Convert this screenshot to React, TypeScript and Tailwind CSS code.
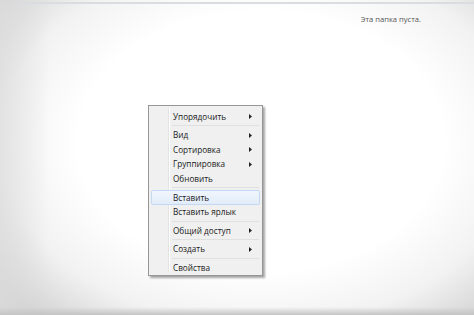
type MenuItem =
  | { kind: "item"; label: string; submenu?: boolean; active?: boolean }
  | { kind: "sep" };

const items: MenuItem[] = [
  { kind: "item", label: "Упорядочить", submenu: true },
  { kind: "sep" },
  { kind: "item", label: "Вид", submenu: true },
  { kind: "item", label: "Сортировка", submenu: true },
  { kind: "item", label: "Группировка", submenu: true },
  { kind: "item", label: "Обновить" },
  { kind: "sep" },
  { kind: "item", label: "Вставить", active: true },
  { kind: "item", label: "Вставить ярлык" },
  { kind: "sep" },
  { kind: "item", label: "Общий доступ", submenu: true },
  { kind: "sep" },
  { kind: "item", label: "Создать", submenu: true },
  { kind: "sep" },
  { kind: "item", label: "Свойства" },
];

function ContextMenu() {
  return (
    <div className="absolute left-[148px] top-[105px] w-[115px] border border-[#979797] bg-[#f0f0f0] pb-[0px] pt-[3px] shadow-[2px_2px_2px_rgba(0,0,0,0.35)]">
      {/* icon gutter */}
      <div className="absolute bottom-[2px] left-[19px] top-[2px] flex w-[2px]">
        <div className="h-full w-px bg-[#e2e3e3]" />
        <div className="h-full w-px bg-white" />
      </div>
      {items.map((item, i) =>
        item.kind === "sep" ? (
          <div key={i} className="flex h-[4px] items-center pl-[23px] pr-[3px]">
            <div className="h-px w-full bg-[#e0e0e0]" />
          </div>
        ) : (
          <div
            key={i}
            className={
              item.active
                ? "relative mx-[2px] flex h-[14.6px] items-center rounded-[2px] border border-[#c3d9f3] bg-gradient-to-b from-[#f1f6fd] to-[#e2ecf9] pl-[21px] pr-[7px] pt-[1px]"
                : "relative mx-[2px] flex h-[14.6px] items-center border border-transparent pl-[21px] pr-[7px] pt-[1px]"
            }
          >
            <span className="flex-1 text-[8.2px] leading-none text-[#1a1a1a]">{item.label}</span>
            {item.submenu && (
              <svg width="3" height="5" viewBox="0 0 3 5">
                <path d="M0 0 L3 2.5 L0 5 Z" fill="#222" />
              </svg>
            )}
          </div>
        )
      )}
    </div>
  );
}

export default function App() {
  return (
    <div
      className="relative h-[315px] w-[474px] overflow-hidden bg-[radial-gradient(ellipse_70%_75%_at_55%_45%,#ffffff_55%,#f2f2f2_78%,#d2d2d2_100%)]"
      style={{ fontFamily: '"Open Sans", "Noto Sans", sans-serif' }}
    >
      <div className="absolute inset-y-0 left-0 w-[50px] bg-gradient-to-r from-[#dcdcdc]/70 to-transparent" />
      <div className="relative ml-[20px] mt-[2px] h-[2px] bg-[#d9dce1]" />
      <div className="relative flex justify-end pr-[53px] pt-[10px]">
        <span className="text-[7.6px] text-[#555]">Эта папка пуста.</span>
      </div>
      <ContextMenu />
      <div className="absolute bottom-0 left-0 h-[8px] w-full bg-gradient-to-b from-transparent to-[#c4c4c4]" />
    </div>
  );
}
